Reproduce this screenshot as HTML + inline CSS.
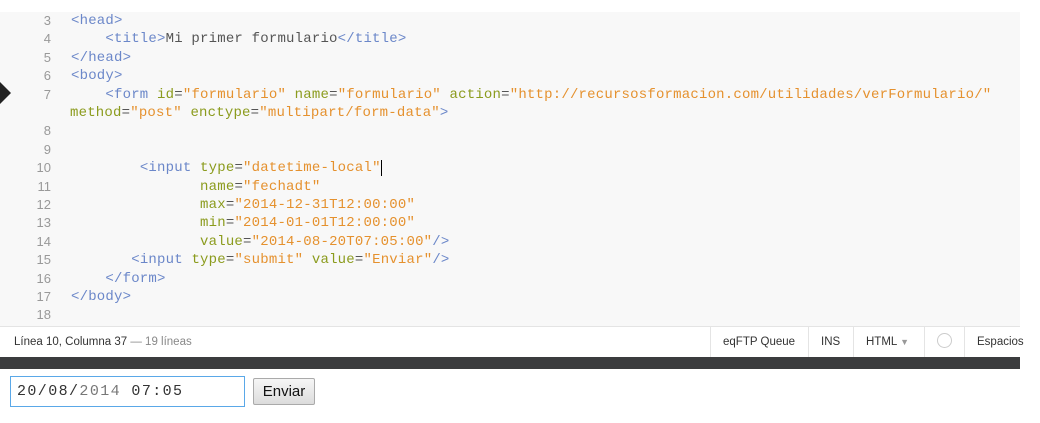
<!DOCTYPE html>
<html><head><meta charset="utf-8"><style>
body{margin:0;width:1040px;height:423px;background:#fff;position:relative;overflow:hidden;font-family:"Liberation Sans",sans-serif}
#ed{position:absolute;left:0;top:12px;width:1020px;height:314px;background:#f8f8f8}
.l{position:absolute;left:0;height:18px;font-family:"Liberation Mono",monospace;font-size:14px;letter-spacing:0.2px;line-height:18px;white-space:pre;color:#555}
.n{position:absolute;left:0;width:51px;text-align:right;color:#999;letter-spacing:0;font-family:"Liberation Sans",sans-serif;font-size:13px}
.c{position:absolute;left:71px}
.t{color:#6b87c9}.a{color:#8b9b1d}.s{color:#e5912e}
#sb{position:absolute;left:0;top:326px;width:1020px;height:31px;background:#fff;border-top:1px solid #e4e4e4;font-size:11.5px;color:#333}
#dk{position:absolute;left:0;top:357px;width:1020px;height:12px;background:#3b3c3e}
.cell{position:absolute;top:0;height:31px;line-height:31px;border-left:1px solid #e4e4e4;padding-left:12px}
</style></head><body>
<div id="ed">
<svg style="position:absolute;left:0;top:70px" width="12" height="24"><polygon points="0,0 11,11 0,22" fill="#222"/></svg>
<div class="l" style="top:0"><span class="n">3</span><span class="c"><span class="t">&lt;head&gt;</span></span></div>
<div class="l" style="top:18.4px"><span class="n">4</span><span class="c">    <span class="t">&lt;title&gt;</span>Mi primer formulario<span class="t">&lt;/title&gt;</span></span></div>
<div class="l" style="top:36.8px"><span class="n">5</span><span class="c"><span class="t">&lt;/head&gt;</span></span></div>
<div class="l" style="top:55.2px"><span class="n">6</span><span class="c"><span class="t">&lt;body&gt;</span></span></div>
<div class="l" style="top:73.6px"><span class="n">7</span><span class="c">    <span class="t">&lt;form</span> <span class="a">id</span>=<span class="s">"formulario"</span> <span class="a">name</span>=<span class="s">"formulario"</span> <span class="a">action</span>=<span class="s">"http://recursosformacion.com/utilidades/verFormulario/"</span></span></div>
<div class="l" style="top:92px"><span class="c" style="left:70px"><span class="a">method</span>=<span class="s">"post"</span> <span class="a">enctype</span>=<span class="s">"multipart/form-data"</span><span class="t">&gt;</span></span></div>
<div class="l" style="top:110.4px"><span class="n">8</span></div>
<div class="l" style="top:128.8px"><span class="n">9</span></div>
<div class="l" style="top:147.2px"><span class="n">10</span><span class="c">        <span class="t">&lt;input</span> <span class="a">type</span>=<span class="s">"datetime-local"</span><span style="border-left:1px solid #000"></span></span></div>
<div class="l" style="top:165.6px"><span class="n">11</span><span class="c">               <span class="a">name</span>=<span class="s">"fechadt"</span></span></div>
<div class="l" style="top:184px"><span class="n">12</span><span class="c">               <span class="a">max</span>=<span class="s">"2014-12-31T12:00:00"</span></span></div>
<div class="l" style="top:202.4px"><span class="n">13</span><span class="c">               <span class="a">min</span>=<span class="s">"2014-01-01T12:00:00"</span></span></div>
<div class="l" style="top:220.8px"><span class="n">14</span><span class="c">               <span class="a">value</span>=<span class="s">"2014-08-20T07:05:00"</span><span class="t">/&gt;</span></span></div>
<div class="l" style="top:239.2px"><span class="n">15</span><span class="c">       <span class="t">&lt;input</span> <span class="a">type</span>=<span class="s">"submit"</span> <span class="a">value</span>=<span class="s">"Enviar"</span><span class="t">/&gt;</span></span></div>
<div class="l" style="top:257.6px"><span class="n">16</span><span class="c">    <span class="t">&lt;/form&gt;</span></span></div>
<div class="l" style="top:276px"><span class="n">17</span><span class="c"><span class="t">&lt;/body&gt;</span></span></div>
<div class="l" style="top:294.4px"><span class="n">18</span></div>
</div>
<div id="sb">
<span style="position:absolute;left:14px;line-height:31px">Línea 10, Columna 37 <span style="color:#888">— 19 líneas</span></span>
<div class="cell" style="left:710px;width:96px">eqFTP Queue</div>
<div class="cell" style="left:808px;width:28px">INS</div>
<div class="cell" style="left:853px;width:58px">HTML <span style="color:#999;font-size:9px">▼</span></div>
<div class="cell" style="left:924px;width:28px"><span style="display:inline-block;width:13px;height:13px;border:1px solid #ccc;border-radius:50%;vertical-align:middle;margin-top:-2px"></span></div>
<div class="cell" style="left:964px;width:56px;overflow:hidden;white-space:nowrap">Espacios</div>
</div>
<div id="dk"></div>
<div style="position:absolute;left:10px;top:376px;width:227px;height:29px;border:1px solid #5aa8e8;font-family:'Liberation Mono',monospace;font-size:15px;line-height:29px;padding-left:6px;color:#333;letter-spacing:1.4px">20/08/<span style="color:#777">2014</span> 07:05</div>
<div style="position:absolute;left:253px;top:378px;width:60px;height:25px;border:1px solid #aaa;border-radius:2px;background:linear-gradient(#f6f6f6,#dcdcdc);font-size:15px;line-height:25px;text-align:center;color:#111">Enviar</div>
</body></html>
